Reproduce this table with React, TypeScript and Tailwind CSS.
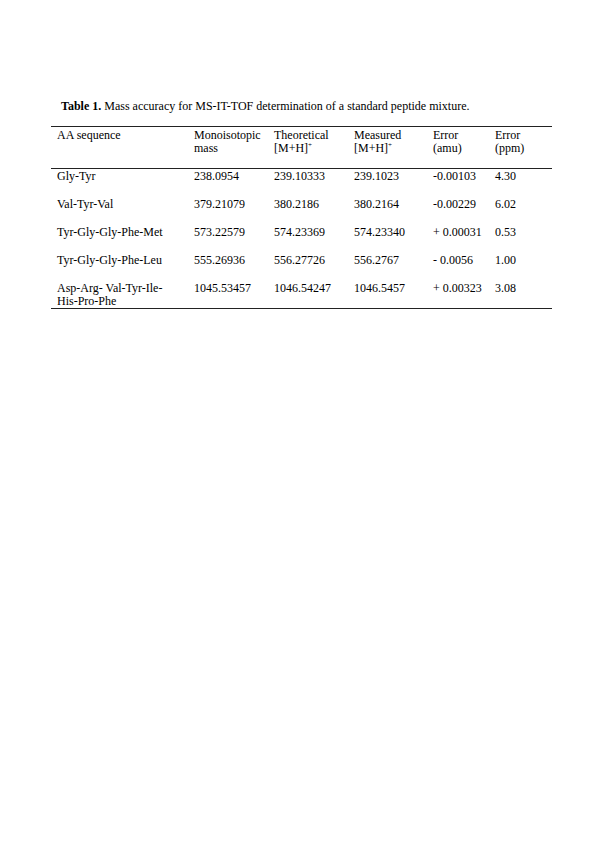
const rows: [string[], string, string, string, string, string][] = [
  [["Gly-Tyr"], "238.0954", "239.10333", "239.1023", "-0.00103", "4.30"],
  [["Val-Tyr-Val"], "379.21079", "380.2186", "380.2164", "-0.00229", "6.02"],
  [["Tyr-Gly-Gly-Phe-Met"], "573.22579", "574.23369", "574.23340", "+ 0.00031", "0.53"],
  [["Tyr-Gly-Gly-Phe-Leu"], "555.26936", "556.27726", "556.2767", "- 0.0056", "1.00"],
  [["Asp-Arg- Val-Tyr-Ile-", "His-Pro-Phe"], "1045.53457", "1046.54247", "1046.5457", "+ 0.00323", "3.08"],
];

function MH() {
  return (
    <div>
      [M+H]<sup className="text-[7px] relative -top-[5px] leading-none">+</sup>
    </div>
  );
}

function Head({ a, b, pl }: { a: string; b: React.ReactNode; pl: string }) {
  return (
    <th className={`font-normal ${pl} pt-[2px] pb-[13px]`}>
      <div>{a}</div>
      {typeof b === "string" ? <div>{b}</div> : b}
    </th>
  );
}

export default function App() {
  return (
    <div
      className="w-[595px] h-[842px] bg-white text-black text-[12px] leading-[13px] pt-[100px] pl-[51px]"
      style={{ fontFamily: '"Liberation Serif", "Times New Roman", serif' }}
    >
      <p className="pl-[10px]">
        <b>Table 1.</b> Mass accuracy for MS-IT-TOF determination of a standard peptide mixture.
      </p>
      <table className="mt-[13px] border-collapse table-fixed w-[501px]">
        <colgroup>
          <col className="w-[139px]" />
          <col className="w-[78px]" />
          <col className="w-[80px]" />
          <col className="w-[80px]" />
          <col className="w-[62px]" />
          <col className="w-[62px]" />
        </colgroup>
        <thead>
          <tr className="border-t border-b border-[#222] align-top text-left">
            <th className="font-normal pl-[6px] pt-[2px] pb-[13px]">AA sequence</th>
            <Head a="Monoisotopic" b="mass" pl="pl-[4px]" />
            <Head a="Theoretical" b={<MH />} pl="pl-[6px]" />
            <Head a="Measured" b={<MH />} pl="pl-[6px]" />
            <Head a="Error" b="(amu)" pl="pl-[5px]" />
            <Head a="Error" b="(ppm)" pl="pl-[5px]" />
          </tr>
        </thead>
        <tbody className="border-b border-[#222]">
          {rows.map(([seq, mono, theo, meas, amu, ppm], i) => {
            const pad = i === rows.length - 1 ? "pt-[1px] pb-[1px]" : "pt-[1px] pb-[14px]";
            return (
              <tr key={i} className="align-top">
                <td className={`pl-[6px] ${pad} leading-[12.5px]`}>
                  {seq.map((s, j) => (
                    <div key={j}>{s}</div>
                  ))}
                </td>
                <td className={`pl-[4px] ${pad}`}>{mono}</td>
                <td className={`pl-[6px] ${pad}`}>{theo}</td>
                <td className={`pl-[6px] ${pad}`}>{meas}</td>
                <td className={`pl-[5px] ${pad}`}>{amu}</td>
                <td className={`pl-[5px] ${pad}`}>{ppm}</td>
              </tr>
            );
          })}
        </tbody>
      </table>
    </div>
  );
}
